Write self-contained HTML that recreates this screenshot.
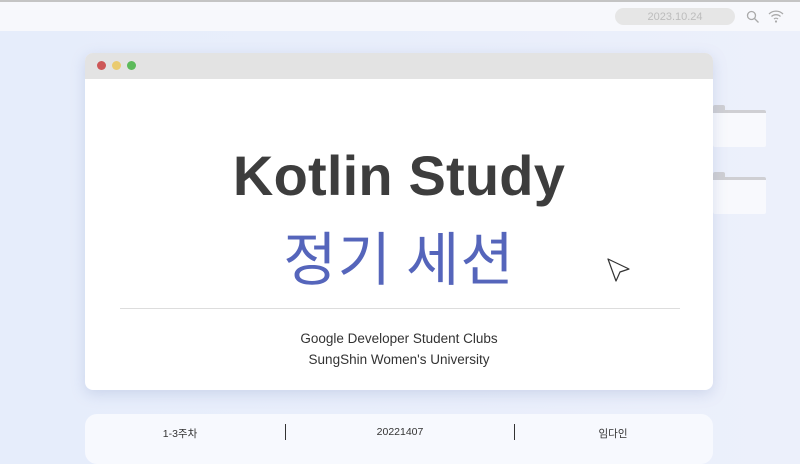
<!DOCTYPE html>
<html><head><meta charset="utf-8"><style>
*{margin:0;padding:0;box-sizing:border-box}
body{width:800px;height:450px;overflow:hidden;background:linear-gradient(90deg,#e6edfb,#e9eefb 60%,#ecf0fb);font-family:"Liberation Sans","Noto Sans CJK KR",sans-serif;position:relative}
.top{position:absolute;left:0;top:0;width:800px;height:31px;background:#f7f8fc;border-top:2px solid #c4c4c4}
.date{position:absolute;left:615px;top:6px;width:120px;height:17px;border-radius:9px;background:#e6e6e6;color:#bcbcbc;font-size:11px;text-align:center;line-height:19px}
.win{position:absolute;left:85px;top:53px;width:628px;height:337px;border-radius:8px;background:#fff;box-shadow:0 4px 14px rgba(120,140,190,.25);overflow:hidden}
.bar{height:26px;background:#e3e3e3}
.dot{position:absolute;top:8px;width:9px;height:9px;border-radius:50%}
.folder{position:absolute;left:713px;width:53px;height:42px}
.t1{position:absolute;left:0;width:628px;text-align:center;top:90px;font-size:56px;font-weight:bold;color:#3d3d3d;letter-spacing:0.2px}
.t2{position:absolute;left:0;width:628px;text-align:center;top:160px;font-family:"Noto Sans CJK KR",sans-serif;font-size:58px;color:#5565bb;letter-spacing:1px}
.line{position:absolute;left:35px;top:255px;width:560px;height:1px;background:#ddd}
.sub{position:absolute;left:0;width:628px;text-align:center;font-size:13.5px;color:#333}
.bot{position:absolute;left:85px;top:414px;width:628px;height:50px;border-radius:12px;background:#f7f9fe}
.bot span{position:absolute;top:12px;font-size:10.5px;color:#333;transform:translateX(-50%)}
.sep{position:absolute;top:10px;width:1px;height:16px;background:#333}
</style></head><body>
<div class="top">
<div class="date">2023.10.24</div>
<svg style="position:absolute;left:746px;top:8px" width="14" height="14" viewBox="0 0 14 14"><circle cx="5.5" cy="5.5" r="4" fill="none" stroke="#aaa" stroke-width="1.3"/><line x1="8.5" y1="8.5" x2="12.5" y2="12.5" stroke="#aaa" stroke-width="1.3"/></svg>
<svg style="position:absolute;left:767px;top:6px" width="18" height="16" viewBox="0 0 18 16"><path d="M2 6a10 10 0 0 1 14 0M4.5 8.5a6.5 6.5 0 0 1 9 0M7 11a3 3 0 0 1 4 0" fill="none" stroke="#aaa" stroke-width="1.3"/><circle cx="9" cy="13.5" r="1.1" fill="#aaa"/></svg>
</div>
<div class="folder" style="top:105px"><div style="position:absolute;left:0;top:0;width:12px;height:7px;background:#cfcfd3;border-radius:2px 2px 0 0"></div><div style="position:absolute;left:0;top:5px;width:53px;height:37px;background:#f8f9fd;border-top:3px solid #cfcfd3;border-radius:2px"></div></div>
<div class="folder" style="top:172px"><div style="position:absolute;left:0;top:0;width:12px;height:7px;background:#cfcfd3;border-radius:2px 2px 0 0"></div><div style="position:absolute;left:0;top:5px;width:53px;height:37px;background:#f8f9fd;border-top:3px solid #cfcfd3;border-radius:2px"></div></div>
<div class="win">
<div class="bar"></div>
<div class="dot" style="left:12px;background:#cd5757"></div>
<div class="dot" style="left:27px;background:#eacb6f"></div>
<div class="dot" style="left:42px;background:#5cba5b"></div>
<div class="t1">Kotlin Study</div>
<div class="t2">정기 세션</div>
<div class="line"></div>
<div class="sub" style="top:278px">Google Developer Student Clubs</div>
<div class="sub" style="top:299px">SungShin Women's University</div>
<svg style="position:absolute;left:520px;top:203px" width="30" height="30" viewBox="0 0 30 30"><path d="M3 3 L24 13 L15 16 L11 25 Z" fill="none" stroke="#333" stroke-width="1.2" stroke-linejoin="round"/></svg>
</div>
<div class="bot">
<span style="left:95px">1-3주차</span>
<div class="sep" style="left:200px"></div>
<span style="left:315px">20221407</span>
<div class="sep" style="left:429px"></div>
<span style="left:528px">임다인</span>
</div>
</body></html>
